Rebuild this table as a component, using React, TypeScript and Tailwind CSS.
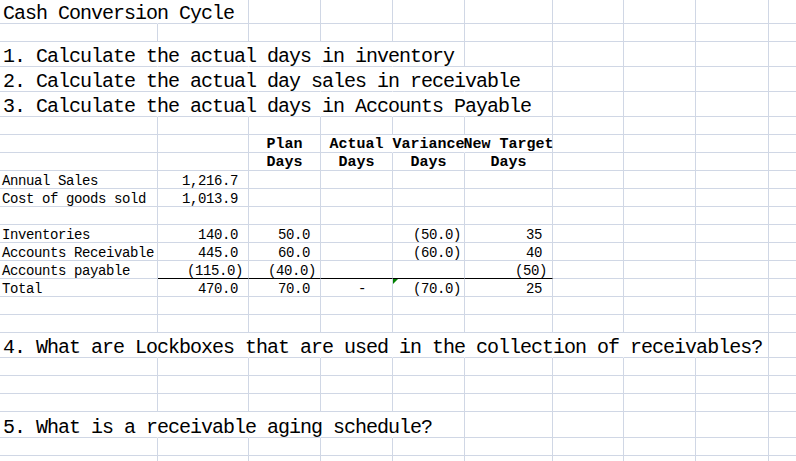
const COLS = [
  "w-[158px]",
  "w-[91px]",
  "w-[72px]",
  "w-[72px]",
  "w-[72px]",
  "w-[88px]",
  "w-[71px]",
  "w-[72px]",
  "w-[73px]",
  "w-[40px]",
];

const BIG = "font-['Liberation_Mono',monospace] text-[20px] tracking-[-1px] leading-[18px] pl-[3px]";
const SMALL = "font-['Liberation_Mono',monospace] text-[14px] tracking-[-0.4px] leading-[14px]";
const HEAD = "font-['Liberation_Mono',monospace] text-[15px] font-bold leading-[14px] justify-center";

type Cell = {
  text?: string;
  cls?: string;
  hide?: boolean;
  black?: boolean;
  tri?: boolean;
};

type Row = { h: string; cells: Cell[] };

const hide = (n: number): Cell[] => Array.from({ length: n }, () => ({ hide: true }));

const label = (text: string): Cell => ({ text, cls: `${SMALL} pl-[2px]` });
const num = (text: string, pr: string): Cell => ({ text, cls: `${SMALL} justify-end ${pr}` });

const rows: Row[] = [
  { h: "h-[24px]", cells: [{ text: "Cash Conversion Cycle", cls: BIG, hide: true }] },
  { h: "h-[18px]", cells: [] },
  {
    h: "h-[25px]",
    cells: [{ text: "1. Calculate the actual days in inventory", cls: BIG, hide: true }, ...hide(3)],
  },
  {
    h: "h-[25px]",
    cells: [{ text: "2. Calculate the actual day sales in receivable", cls: BIG, hide: true }, ...hide(4)],
  },
  {
    h: "h-[25px]",
    cells: [{ text: "3. Calculate the actual days in Accounts Payable", cls: BIG, hide: true }, ...hide(4)],
  },
  { h: "h-[18px]", cells: [] },
  {
    h: "h-[18px]",
    cells: [
      {},
      {},
      { text: "Plan", cls: HEAD },
      { text: "Actual", cls: HEAD, hide: true },
      { text: "Variance", cls: HEAD, hide: true },
      { text: "New Target", cls: HEAD },
    ],
  },
  {
    h: "h-[18px]",
    cells: [
      {},
      {},
      { text: "Days", cls: HEAD },
      { text: "Days", cls: HEAD },
      { text: "Days", cls: HEAD },
      { text: "Days", cls: HEAD },
    ],
  },
  { h: "h-[18px]", cells: [label("Annual Sales"), num("1,216.7", "pr-[10px]")] },
  { h: "h-[18px]", cells: [label("Cost of goods sold"), num("1,013.9", "pr-[10px]")] },
  { h: "h-[18px]", cells: [] },
  {
    h: "h-[18px]",
    cells: [
      label("Inventories"),
      num("140.0", "pr-[10px]"),
      num("50.0", "pr-[10px]"),
      {},
      num("(50.0)", "pr-[3px]"),
      num("35", "pr-[10px]"),
    ],
  },
  {
    h: "h-[18px]",
    cells: [
      label("Accounts Receivable"),
      num("445.0", "pr-[10px]"),
      num("60.0", "pr-[10px]"),
      {},
      num("(60.0)", "pr-[3px]"),
      num("40", "pr-[10px]"),
    ],
  },
  {
    h: "h-[18px]",
    cells: [
      label("Accounts payable"),
      { ...num("(115.0)", "pr-[5px]"), black: true },
      { ...num("(40.0)", "pr-[4px]"), black: true },
      { black: true },
      { black: true },
      { ...num("(50)", "pr-[5px]"), black: true },
    ],
  },
  {
    h: "h-[18px]",
    cells: [
      label("Total"),
      num("470.0", "pr-[10px]"),
      num("70.0", "pr-[10px]"),
      num("-", "pr-[26px]"),
      { ...num("(70.0)", "pr-[3px]"), tri: true },
      num("25", "pr-[10px]"),
    ],
  },
  { h: "h-[18px]", cells: [] },
  { h: "h-[18px]", cells: [] },
  {
    h: "h-[25px]",
    cells: [
      { text: "4. What are Lockboxes that are used in the collection of receivables?", cls: BIG, hide: true },
      ...hide(7),
    ],
  },
  { h: "h-[18px]", cells: [] },
  { h: "h-[18px]", cells: [] },
  { h: "h-[18px]", cells: [] },
  {
    h: "h-[26px]",
    cells: [{ text: "5. What is a receivable aging schedule?", cls: BIG, hide: true }, ...hide(3)],
  },
  { h: "h-[18px]", cells: [] },
  { h: "h-[18px]", cells: [] },
];

export default function App() {
  return (
    <div className="w-[796px] h-[461px] overflow-hidden bg-white text-black">
      {rows.map((row, r) => (
        <div key={r} className={`flex ${row.h}`}>
          {COLS.map((w, c) => {
            const cell = row.cells[c] ?? {};
            return (
              <div
                key={c}
                className={`relative flex shrink-0 items-end whitespace-nowrap border-r border-b border-[#d0d7e5] ${w} ${
                  cell.hide ? "border-r-transparent" : ""
                } ${cell.black ? "border-b-black" : ""} ${cell.cls ?? ""}`}
              >
                {/* error indicator */}
                {cell.tri && (
                  <span className="absolute left-0 top-0 h-0 w-0 border-t-[5px] border-r-[5px] border-t-[#008000] border-r-transparent" />
                )}
                {cell.text}
              </div>
            );
          })}
        </div>
      ))}
    </div>
  );
}
